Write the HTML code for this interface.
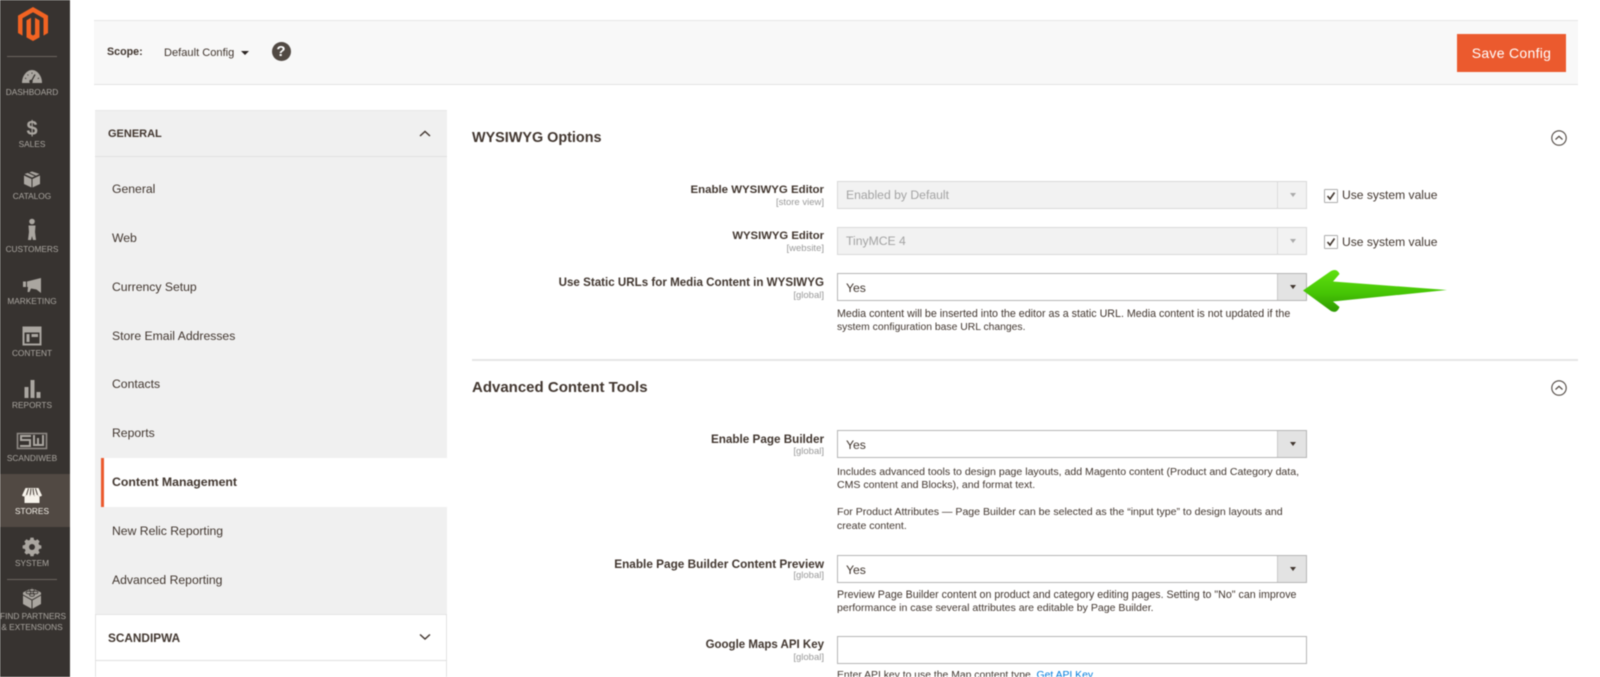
<!DOCTYPE html>
<html><head><meta charset="utf-8"><title>Configuration</title>
<style>
html,body{margin:0;padding:0;background:#fff}
body{width:1600px;height:677px;overflow:hidden;position:relative;font-family:"Liberation Sans",sans-serif;color:#41362f}
#w{position:absolute;left:0;top:0;width:1600px;height:677px;overflow:hidden;filter:blur(.4px)}
.a{position:absolute}
.t{position:absolute;white-space:nowrap;line-height:16px}
.nl{position:absolute;left:0;width:64px;text-align:center;font-size:8.3px;line-height:12px;color:#aaa6a0;white-space:nowrap}
.ni{position:absolute;left:16px;width:32px;height:28px}
.m{font-size:12.2px;left:112px;color:#41362f}
.lab{position:absolute;right:776px;font-size:11.7px;font-weight:700;line-height:16px;white-space:nowrap;color:#41362f}
.sc{position:absolute;right:776px;font-size:9.5px;line-height:12px;color:#999;white-space:nowrap}
.sel{position:absolute;left:837px;width:468px;height:26px;border:1px solid #b5b5b5;background:#fff;font-size:12.2px;line-height:28px;color:#41362f}
.sel span{position:absolute;left:8px;top:0}
.sel i{position:absolute;right:0;top:0;width:28px;height:26px;background:#e3e3e3;border-left:1px solid #c8c8c8}
.sel i:after{content:"";position:absolute;left:11.5px;top:11px;border:3.5px solid transparent;border-top:4.5px solid #41362f;border-bottom:0}
.dis{background:#f2f2f2;border-color:#d9d9d9;color:#a3a3a3;line-height:27px}
.dis i{background:#f2f2f2;border-left-color:#dcdcdc}
.dis i:after{border-top-color:#aaa}
.n{position:absolute;left:837px;font-size:10.56px;line-height:14px;white-space:nowrap;color:#41362f}
.h{position:absolute;left:472px;font-weight:700;line-height:18px;white-space:nowrap;color:#41362f}
.cb{position:absolute;left:1324px;width:12px;height:12px;border:1px solid #adadad;background:#fff;border-radius:1px}
.u{position:absolute;left:1342px;font-size:12.1px;line-height:16px;white-space:nowrap;color:#41362f}
</style></head><body><div id="w">

<!-- admin sidebar -->
<div class="a" style="left:0;top:0;width:69.5px;height:677px;background:#373330"></div>
<div class="a" style="left:0;top:474px;width:69.5px;height:52.5px;background:#514943"></div>
<div class="a" style="left:7px;top:56px;width:50px;height:1px;background:#6b645e"></div>
<div class="a" style="left:7px;top:579px;width:50px;height:1px;background:#6b645e"></div>

<svg class="a" style="left:17.5px;top:7px" width="30" height="34" viewBox="0 0 30 34"><path fill="#f26322" d="M15 0L30 8.6V26L25.5 28.6V11.2L15 5.2 4.5 11.2V28.6L0 26V8.6Z"/><path fill="#f26322" d="M8.5 13.4L13 10.8V27.3L15 28.5 17 27.3V10.8L21.5 13.4V30.4L15 34 8.5 30.4Z"/></svg>

<svg class="ni" style="top:68px" viewBox="0 0 32 28"><path fill="#aaa6a0" d="M6 15C6 7.500 11 2 16 2S26 7.500 26 15Z"/><path fill="none" stroke="#373330" stroke-width="1.300" d="M15 14L19 6.500"/><circle cx="15" cy="13.500" r="1.700" fill="#373330"/><path stroke="#373330" stroke-width=".9" d="M9 10l1.200.8M11.500 6.500l.8 1M16 4.500v1.200M23 10l-1.200.8"/></svg>
<div class="nl" style="top:86px">DASHBOARD</div>

<div class="a" style="left:0;width:64px;text-align:center;top:116.500px;font-size:20px;font-weight:700;line-height:24px;color:#aaa6a0">$</div>
<div class="nl" style="top:138px">SALES</div>

<svg class="ni" style="top:166px" viewBox="0 0 32 28"><path fill="#aaa6a0" d="M8 9.500L15.500 13V21.500L8 18zM24 9.500L16.500 13V21.500L24 18zM8.500 8L16 5.500 23.500 8 16 11.500z"/><path stroke="#373330" stroke-width="1.200" d="M12 6.500L19.500 10"/></svg>
<div class="nl" style="top:190px">CATALOG</div>

<svg class="ni" style="top:217px" viewBox="0 0 32 28"><circle cx="16" cy="4.500" r="2.800" fill="#aaa6a0"/><path fill="#aaa6a0" d="M12.500 8.500H19.500L19 15 20 23H17L16 19 15 23H12L13 15Z"/></svg>
<div class="nl" style="top:242.500px">CUSTOMERS</div>

<svg class="ni" style="top:272px" viewBox="0 0 32 28"><path fill="#aaa6a0" d="M7 9.500H10V15H7zM11 9.500L25 6V21L20.500 17.500 15 16.500 13.500 20H11.500L12 15H11z"/></svg>
<div class="nl" style="top:294.500px">MARKETING</div>

<svg class="ni" style="top:322px" viewBox="0 0 32 28"><rect x="7.500" y="5.500" width="17" height="17" fill="none" stroke="#aaa6a0" stroke-width="2"/><path fill="#aaa6a0" d="M7.500 5.500h17v5h-17zM10.500 12h3v8h-3zM15.500 12h6.500v3h-6.500z"/></svg>
<div class="nl" style="top:347px">CONTENT</div>

<svg class="ni" style="top:374px" viewBox="0 0 32 28"><path fill="#aaa6a0" d="M8.500 13h4v11h-4zM14.500 6h4v18h-4zM20.500 18h4v6h-4z"/></svg>
<div class="nl" style="top:399px">REPORTS</div>

<svg class="ni" style="top:427px" viewBox="0 0 32 28"><path fill="none" stroke="#8f8a85" stroke-width="1.600" d="M1.500 6.500H30.500V21.500H1.500z"/><path fill="none" stroke="#aaa6a0" stroke-width="2" d="M15 9H5V13H14V19H4M18 8V18H22V11M22 18H27V8"/></svg>
<div class="nl" style="top:451.500px">SCANDIWEB</div>

<svg class="ni" style="top:480px" viewBox="0 0 32 28"><path fill="#f7f3eb" d="M8.500 16H23.500V23H8.500z"/><path fill="#f7f3eb" d="M9.500 8H22.500L26 15.500Q24 17.500 22.500 15.500 20.500 17.500 18.500 15.500 16 17.500 14 15.500 12 17.500 9.500 15.500 8 17.500 6 15.500Z"/><path stroke="#514943" stroke-width="1.100" d="M12.500 8.500L10.500 15M15 8.500L14.200 15M17 8.500L17.800 15M19.500 8.500L21.500 15"/></svg>
<div class="nl" style="top:504.500px;color:#f7f3eb">STORES</div>

<svg class="ni" style="top:533px" viewBox="0 0 32 28"><g transform="translate(16 14) scale(.78) translate(-16 -16)"><path fill="#aaa6a0" d="M14 4h4l.6 2.800 2 .8 2.400-1.500 2.800 2.800-1.500 2.400.8 2 2.900.7v4l-2.900.6-.8 2 1.500 2.400-2.800 2.800-2.400-1.500-2 .8-.6 2.800h-4l-.6-2.800-2-.8-2.400 1.500-2.800-2.800 1.500-2.400-.8-2-2.900-.6v-4l2.900-.7.800-2-1.500-2.400 2.800-2.800 2.400 1.500 2-.8z"/><circle cx="16" cy="16" r="3.800" fill="#373330"/></g></svg>
<div class="nl" style="top:557px">SYSTEM</div>

<svg class="ni" style="top:584px" viewBox="0 0 32 28"><path fill="#aaa6a0" d="M7 8.500L16 4 25 8.500V20L16 25 7 20Z"/><path fill="none" stroke="#373330" stroke-width="1" d="M7 11L16 16 25 11M16 16V25"/><ellipse cx="12.500" cy="8.500" rx="2.400" ry="1.300" fill="#aaa6a0" stroke="#373330" stroke-width=".8"/><ellipse cx="19.500" cy="8.500" rx="2.400" ry="1.300" fill="#aaa6a0" stroke="#373330" stroke-width=".8"/><ellipse cx="16" cy="6" rx="2.400" ry="1.300" fill="#aaa6a0" stroke="#373330" stroke-width=".8"/><ellipse cx="16" cy="11" rx="2.400" ry="1.300" fill="#aaa6a0" stroke="#373330" stroke-width=".8"/></svg>
<div class="nl" style="top:609.500px">FIND PARTNERS</div>
<div class="nl" style="top:621px">&amp; EXTENSIONS</div>

<!-- page actions -->
<div class="a" style="left:94px;top:20px;width:1484px;height:63px;background:#f8f8f8;border-top:1px solid #e6e6e6;border-bottom:1px solid #e3e3e3"></div>
<div class="t" style="left:107px;top:44px;font-size:10.7px;font-weight:700;color:#41362f">Scope:</div>
<div class="t" style="left:164px;top:44.500px;font-size:11.1px;color:#41362f">Default Config</div>
<div class="a" style="left:241px;top:51px;width:0;height:0;border:4px solid transparent;border-top:4.500px solid #2b2522;border-bottom:0"></div>
<div class="a" style="left:271.500px;top:42px;width:19px;height:19px;border-radius:50%;background:#514943;color:#fff;font-size:15px;font-weight:700;line-height:19px;text-align:center">?</div>
<div class="a" style="left:1457px;top:33.500px;width:109px;height:38px;background:#eb5a2e;color:#fff;font-size:14px;line-height:38px;text-align:center;letter-spacing:.3px">Save Config</div>

<!-- tabs -->
<div class="a" style="left:94.500px;top:110px;width:352px;height:504px;background:#f0f0f0;border-top:1px solid #e8e8e8;box-sizing:border-box"></div>
<div class="a" style="left:95px;top:156px;width:351.500px;height:1px;background:#e0e0e0"></div>
<div class="t" style="left:108px;top:126px;font-size:11px;font-weight:700;color:#41362f">GENERAL</div>
<svg class="a" style="left:418px;top:128px" width="14" height="10" viewBox="0 0 14 10"><path d="M2 8L7 3.500 12 8" fill="none" stroke="#41362f" stroke-width="1.400"/></svg>
<div class="t m" style="top:181px">General</div>
<div class="t m" style="top:230px">Web</div>
<div class="t m" style="top:279px">Currency Setup</div>
<div class="t m" style="top:328px">Store Email Addresses</div>
<div class="t m" style="top:376px">Contacts</div>
<div class="t m" style="top:425px">Reports</div>
<div class="a" style="left:101px;top:458px;width:346px;height:49px;background:#fff"></div>
<div class="a" style="left:101px;top:458px;width:3px;height:49px;background:#eb5a2e"></div>
<div class="t m" style="top:474px;font-weight:700;font-size:12.3px">Content Management</div>
<div class="t m" style="top:523px">New Relic Reporting</div>
<div class="t m" style="top:572px">Advanced Reporting</div>
<div class="a" style="left:95px;top:614px;width:350px;height:63px;background:#fff;border-left:1px solid #e3e3e3;border-right:1px solid #e3e3e3"></div>
<div class="a" style="left:95px;top:614px;width:352px;height:1px;background:#e3e3e3"></div>
<div class="a" style="left:95px;top:660px;width:352px;height:1px;background:#e0e0e0"></div>
<div class="t" style="left:108px;top:630px;font-size:11.8px;font-weight:700;color:#41362f">SCANDIPWA</div>
<svg class="a" style="left:418px;top:632px" width="14" height="10" viewBox="0 0 14 10"><path d="M2 2.500L7 7 12 2.500" fill="none" stroke="#41362f" stroke-width="1.400"/></svg>

<!-- WYSIWYG -->
<div class="h" style="top:129px;font-size:14.4px">WYSIWYG Options</div>
<svg class="a" style="left:1550px;top:128.500px" width="18" height="18" viewBox="0 0 18 18"><circle cx="9" cy="9" r="7.200" fill="none" stroke="#514943" stroke-width="1.100"/><path d="M5.500 10.500L9 7.300 12.500 10.500" fill="none" stroke="#514943" stroke-width="1.200"/></svg>

<div class="lab" style="top:182px;font-size:11.45px">Enable WYSIWYG Editor</div><div class="sc" style="top:197px">[store view]</div>
<div class="sel dis" style="top:181px"><span>Enabled by Default</span><i></i></div>
<div class="cb" style="top:188.500px"><svg style="position:absolute;left:1px;top:1px" width="10" height="10" viewBox="0 0 10 10"><path d="M1.500 5L4 8 8.500 1.500" fill="none" stroke="#41362f" stroke-width="1.600"/></svg></div>
<div class="u" style="top:187px">Use system value</div>

<div class="lab" style="top:228px;font-size:11.3px">WYSIWYG Editor</div><div class="sc" style="top:243px">[website]</div>
<div class="sel dis" style="top:227px"><span>TinyMCE 4</span><i></i></div>
<div class="cb" style="top:235px"><svg style="position:absolute;left:1px;top:1px" width="10" height="10" viewBox="0 0 10 10"><path d="M1.500 5L4 8 8.500 1.500" fill="none" stroke="#41362f" stroke-width="1.600"/></svg></div>
<div class="u" style="top:234px">Use system value</div>

<div class="lab" style="top:275px;font-size:11.6px">Use Static URLs for Media Content in WYSIWYG</div><div class="sc" style="top:290px">[global]</div>
<div class="sel" style="top:273px"><span>Yes</span><i></i></div>
<div class="n" style="top:307px;font-size:10.7px">Media content will be inserted into the editor as a static URL. Media content is not updated if the</div>
<div class="n" style="top:321px;font-size:10.36px">system configuration base URL changes.</div>

<svg class="a" style="left:1300px;top:268px" width="152" height="46" viewBox="0 0 152 46"><defs><linearGradient id="g" x1="0" y1="0" x2="0" y2="1"><stop offset="0" stop-color="#5fe00f"/><stop offset=".55" stop-color="#46c505"/><stop offset="1" stop-color="#2f9a03"/></linearGradient></defs><path fill="url(#g)" d="M3 22.500L31 3Q37 0 39.500 6L33 13.500 147 22 33 33.500 39.500 39Q37 46 31 43Z"/></svg>

<div class="a" style="left:472px;top:359px;width:1106px;height:2px;background:#e6e6e6"></div>

<!-- Advanced -->
<div class="h" style="top:379px;font-size:15px">Advanced Content Tools</div>
<svg class="a" style="left:1550px;top:378.500px" width="18" height="18" viewBox="0 0 18 18"><circle cx="9" cy="9" r="7.200" fill="none" stroke="#514943" stroke-width="1.100"/><path d="M5.500 10.500L9 7.300 12.500 10.500" fill="none" stroke="#514943" stroke-width="1.200"/></svg>

<div class="lab" style="top:431.500px">Enable Page Builder</div><div class="sc" style="top:446px">[global]</div>
<div class="sel" style="top:430px"><span>Yes</span><i></i></div>
<div class="n" style="top:464.500px">Includes advanced tools to design page layouts, add Magento content (Product and Category data,</div>
<div class="n" style="top:478px">CMS content and Blocks), and format text.</div>
<div class="n" style="top:505px">For Product Attributes — Page Builder can be selected as the “input type” to design layouts and</div>
<div class="n" style="top:519px">create content.</div>

<div class="lab" style="top:555.500px;font-size:11.8px">Enable Page Builder Content Preview</div><div class="sc" style="top:570px">[global]</div>
<div class="sel" style="top:554.500px"><span>Yes</span><i></i></div>
<div class="n" style="top:587.500px;font-size:10.65px">Preview Page Builder content on product and category editing pages. Setting to "No" can improve</div>
<div class="n" style="top:600.500px">performance in case several attributes are editable by Page Builder.</div>

<div class="lab" style="top:637px;font-size:11.5px">Google Maps API Key</div><div class="sc" style="top:652px">[global]</div>
<div class="sel" style="top:635.500px"></div>
<div class="n" style="top:669px;font-size:10.38px">Enter API key to use the Map content type. <span style="color:#007bdb">Get API Key</span></div>

</div></body></html>
